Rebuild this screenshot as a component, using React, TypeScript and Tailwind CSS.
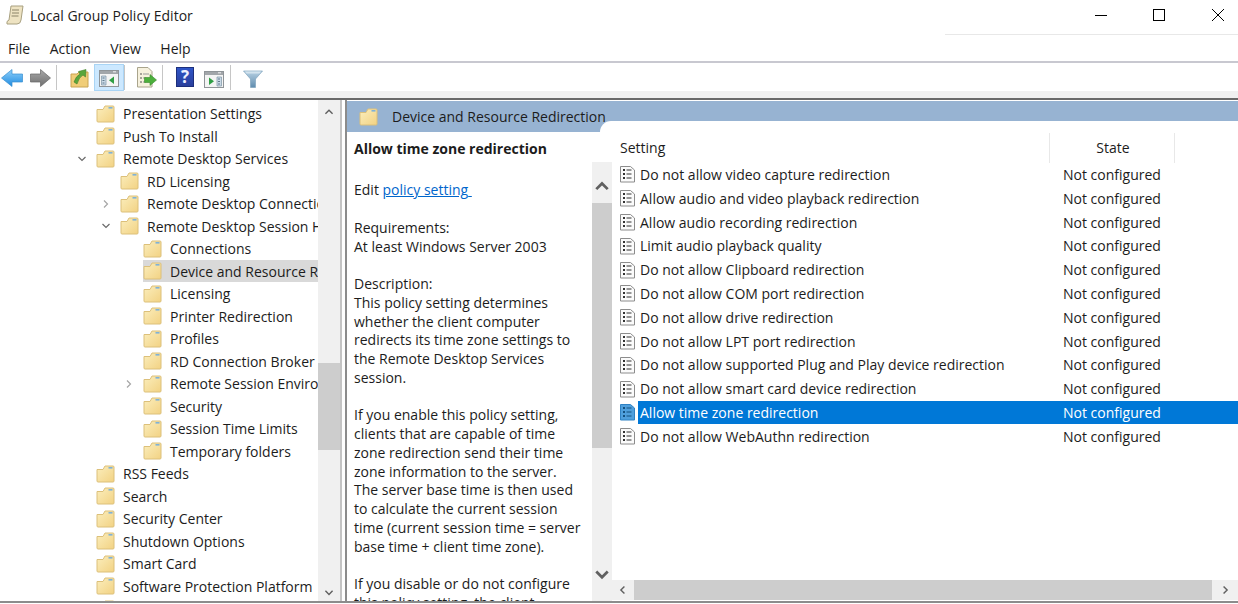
const treeRows = [
  { label: "Presentation Settings", depth: 0 },
  { label: "Push To Install", depth: 0 },
  { label: "Remote Desktop Services", depth: 0, chevron: "down" },
  { label: "RD Licensing", depth: 1 },
  { label: "Remote Desktop Connection Client", depth: 1, chevron: "right" },
  { label: "Remote Desktop Session Host", depth: 1, chevron: "down" },
  { label: "Connections", depth: 2 },
  { label: "Device and Resource Redirection", depth: 2, selected: true },
  { label: "Licensing", depth: 2 },
  { label: "Printer Redirection", depth: 2 },
  { label: "Profiles", depth: 2 },
  { label: "RD Connection Broker", depth: 2 },
  { label: "Remote Session Environment", depth: 2, chevron: "right" },
  { label: "Security", depth: 2 },
  { label: "Session Time Limits", depth: 2 },
  { label: "Temporary folders", depth: 2 },
  { label: "RSS Feeds", depth: 0 },
  { label: "Search", depth: 0 },
  { label: "Security Center", depth: 0 },
  { label: "Shutdown Options", depth: 0 },
  { label: "Smart Card", depth: 0 },
  { label: "Software Protection Platform", depth: 0 },
  { label: "Sound Recording", depth: 0 },
];

const settings = [
  "Do not allow video capture redirection",
  "Allow audio and video playback redirection",
  "Allow audio recording redirection",
  "Limit audio playback quality",
  "Do not allow Clipboard redirection",
  "Do not allow COM port redirection",
  "Do not allow drive redirection",
  "Do not allow LPT port redirection",
  "Do not allow supported Plug and Play device redirection",
  "Do not allow smart card device redirection",
  "Allow time zone redirection",
  "Do not allow WebAuthn redirection",
];

const depthClass = ["pl-[75px]", "pl-[99px]", "pl-[122px]"];

function FolderIcon() {
  return (
    <svg width="19" height="18" viewBox="0 0 19 18" className="shrink-0">
      <defs>
        <linearGradient id="folderFill" x1="0" y1="0" x2="1" y2="1">
          <stop offset="0" stopColor="#fbeebd" />
          <stop offset="1" stopColor="#f2d283" />
        </linearGradient>
      </defs>
      <path d="M1 4.5 L1 16 Q1 17 2 17 L17 17 Q18 17 18 16 L18 2 Q18 1 17 1 L9 1 L7 4.5 Z" fill="url(#folderFill)" stroke="#dcc07a" strokeWidth="1" />
      <rect x="12.5" y="2" width="4" height="1.6" fill="#7fb2d8" />
    </svg>
  );
}

function PolicyIcon({ active }: { active?: boolean }) {
  const line = active ? "#14507f" : "#333333";
  return (
    <svg width="17" height="18" viewBox="0 0 17 18" className="shrink-0">
      <path d="M1.5 1.5 L11.5 1.5 L15.5 5 L15.5 17 L1.5 17 Z" fill={active ? "#4f9fdc" : "#fbfbfb"} stroke={active ? "#2f82c4" : "#8c8c8c"} />
      <path d="M4 5h2M4 9h2M4 13h2" stroke={line} strokeWidth="1.8" />
      <path d="M7.5 5h5M7.5 9h5M7.5 13h5" stroke={line} strokeWidth="1" />
    </svg>
  );
}

function Chevron({ dir }: { dir: string }) {
  return (
    <svg width="10" height="10" viewBox="0 0 10 10">
      {dir === "down" ? (
        <path d="M1.5 3 L5 6.5 L8.5 3" fill="none" stroke="#6a6a6a" strokeWidth="1.2" />
      ) : (
        <path d="M3 1.5 L6.5 5 L3 8.5" fill="none" stroke="#a6a6a6" strokeWidth="1.2" />
      )}
    </svg>
  );
}

function ScrollArrow({ dir, heavy }: { dir: "up" | "down" | "left" | "right"; heavy?: boolean }) {
  const paths = {
    up: "M2 8 L7 3 L12 8",
    down: "M2 4 L7 9 L12 4",
    left: "M9 2 L4 7 L9 12",
    right: "M5 2 L10 7 L5 12",
  };
  return (
    <svg width={heavy ? 16 : 10} height={heavy ? 16 : 10} viewBox="0 0 14 14">
      <path d={paths[dir]} fill="none" stroke="#606060" strokeWidth={heavy ? 2.4 : 2} />
    </svg>
  );
}

function Sep() {
  return <div className="w-px h-[25px] bg-[#c6c6c6] shrink-0" />;
}

function PaneIcon({ arrowLeft }: { arrowLeft?: boolean }) {
  return (
    <svg width="20" height="17" viewBox="0 0 20 17">
      <rect x="0.5" y="0.5" width="19" height="16" fill="#f4f4f4" stroke="#8f9498" />
      <rect x="1" y="1" width="18" height="3" fill="#a2a6aa" />
      <path d="M14 1.8h3" stroke="#f4f4f4" />
      {arrowLeft ? (
        <>
          <path d="M2.5 6h4.5v9h-4.5z" fill="#c9d9e6" stroke="#7d93a3" strokeWidth="0.7" />
          <path d="M3.5 8h2M3.5 10.5h2M3.5 13h2" stroke="#62788a" />
          <path d="M15 6.5 L15 14 L10 10.25 Z" fill="#2f9e44" />
        </>
      ) : (
        <>
          <path d="M13 6h4.5v9h-4.5z" fill="#c9d9e6" stroke="#7d93a3" strokeWidth="0.7" />
          <path d="M14 8h2M14 10.5h2M14 13h2" stroke="#62788a" />
          <path d="M5 6.5 L5 14 L10 10.25 Z" fill="#2f9e44" />
        </>
      )}
    </svg>
  );
}

function Toolbar() {
  return (
    <div className="h-[28px] flex items-center shrink-0 bg-white">
      <svg width="22" height="18" viewBox="0 0 22 18" className="ml-px mt-[2px]">
        <defs>
          <linearGradient id="backFill" x1="0" y1="0" x2="0" y2="1">
            <stop offset="0" stopColor="#8fd0fa" />
            <stop offset="1" stopColor="#1f8be0" />
          </linearGradient>
          <linearGradient id="fwdFill" x1="0" y1="0" x2="0" y2="1">
            <stop offset="0" stopColor="#a8a8a8" />
            <stop offset="1" stopColor="#6f6f6f" />
          </linearGradient>
          <linearGradient id="funnelFill" x1="0" y1="0" x2="0" y2="1">
            <stop offset="0" stopColor="#b9d2e4" />
            <stop offset="1" stopColor="#5f8cae" />
          </linearGradient>
        </defs>
        <path d="M0.5 9 L11 0.5 L11 5 L21.5 5 L21.5 13 L11 13 L11 17.5 Z" fill="url(#backFill)" stroke="#3a8fd0" strokeWidth="0.7" />
      </svg>
      <svg width="21" height="18" viewBox="0 0 21 18" className="ml-[7px] mt-[2px]">
        <path d="M20.5 9 L10.5 0.5 L10.5 5 L0.5 5 L0.5 13 L10.5 13 L10.5 17.5 Z" fill="url(#fwdFill)" stroke="#666666" strokeWidth="0.7" />
      </svg>
      <div className="ml-[5px]"><Sep /></div>
      <svg width="20" height="20" viewBox="0 0 20 20" className="ml-[13px] mt-[2px]">
        <path d="M1 6 L1 19 L18 19 L18 4 L9 4 L7 6 Z" fill="#f0cd78" stroke="#c9a452" />
        <path d="M4 14 Q6 8 10 6 L8.5 3.5 L16 1.5 L15.5 9 L13 7 Q9 9 7 16 Z" fill="#5aa63c" stroke="#3f7f28" strokeWidth="0.6" />
      </svg>
      <div className="ml-[4px] w-[30px] h-[27px] bg-[#cce8ff] border border-[#a9d4f5] flex items-center justify-center">
        <div className="mt-[3px] flex"><PaneIcon arrowLeft /></div>
      </div>
      <Sep />
      <svg width="21" height="21" viewBox="0 0 21 21" className="ml-[11px] mt-[1px]">
        <path d="M1.5 0.5 L12 0.5 L16 4.5 L16 20 L1.5 20 Z" fill="#f6f1de" stroke="#a9a48c" />
        <path d="M4 7h2M4 11h2M4 15h2" stroke="#555555" />
        <path d="M7 7h6M7 11h3M7 15h3" stroke="#999999" />
        <path d="M20.5 13 L14 7.5 L14 10.5 L8.5 10.5 L8.5 15.5 L14 15.5 L14 18.5 Z" fill="#4caf3c" stroke="#37892a" strokeWidth="0.6" />
      </svg>
      <div className="ml-[5px]"><Sep /></div>
      <div className="ml-[13px] w-[18px] h-[20px] bg-linear-to-b from-[#2f55c8] to-[#2a3f9c] border border-[#1d2f7c] text-[#eef0ff] text-[17px] font-bold leading-[18px] text-center">?</div>
      <div className="ml-[10px] mt-[4px] flex"><PaneIcon /></div>
      <div className="ml-[6px]"><Sep /></div>
      <svg width="20" height="18" viewBox="0 0 20 18" className="ml-[12px] mt-[3px]">
        <path d="M0.5 1 L19.5 1 L12.5 9 L12.5 17.5 L7.5 17.5 L7.5 9 Z" fill="url(#funnelFill)" stroke="#7fa3bd" strokeWidth="0.7" />
        <path d="M2 1.5 L18 1.5 L16.5 3.5 L3.5 3.5 Z" fill="#d3e3ee" />
      </svg>
    </div>
  );
}

function Tree() {
  return (
    <div className="w-[318px] overflow-hidden pt-[2.4px] shrink-0">
      {treeRows.map((row) => (
        <div key={row.label} className={`h-[22.5px] flex items-center ${depthClass[row.depth]}`}>
          <div className="w-[21px] pl-[2px] shrink-0 flex items-center">
            {row.chevron && <Chevron dir={row.chevron} />}
          </div>
          <div className={`flex-1 min-w-0 h-full flex items-center ${row.selected ? "bg-[#d9d9d9]" : ""}`}>
            <FolderIcon />
            <span className="ml-[8px] whitespace-nowrap">{row.label}</span>
          </div>
        </div>
      ))}
    </div>
  );
}

function TreeScrollbar() {
  return (
    <div className="w-[24px] bg-[#f0f0f0] flex flex-col items-center shrink-0 border-r-2 border-[#c4c4c4]">
      <div className="h-[26px] flex items-center justify-center"><ScrollArrow dir="up" /></div>
      <div className="mt-[237px] h-[87px] w-full bg-[#cdcdcd]" />
      <div className="flex-1" />
      <div className="h-[16px] flex items-center justify-center"><ScrollArrow dir="down" /></div>
    </div>
  );
}

function Details() {
  return (
    <div className="w-[245px] shrink-0 overflow-hidden pl-[7px] pr-[8px] pt-[7px] leading-[18.75px]">
      <p className="font-bold leading-[20px]">Allow time zone redirection</p>
      <p className="mt-[22px]">Edit <span className="text-[#0066cc] underline">policy setting{"\u00a0"}</span></p>
      <p className="mt-[19px]">Requirements:<br />At least Windows Server 2003</p>
      <p className="mt-[18.75px]">Description:<br />This policy setting determines whether the client computer redirects its time zone settings to the Remote Desktop Services session.</p>
      <p className="mt-[18.75px]">If you enable this policy setting, clients that are capable of time zone redirection send their time zone information to the server. The server base time is then used to calculate the current session time (current session time = server base time + client time zone).</p>
      <p className="mt-[18.75px]">If you disable or do not configure this policy setting, the client computer does not redirect its time zone.</p>
    </div>
  );
}

function DetailsScrollbar() {
  return (
    <div className="w-[20px] shrink-0 mt-[30px] bg-[#f0f0f0] flex flex-col items-center">
      <div className="h-[41px] flex items-center justify-center pt-[11px]"><ScrollArrow dir="up" heavy /></div>
      <div className="h-[245px] w-full bg-[#cdcdcd]" />
      <div className="flex-1" />
      <div className="h-[24px] flex items-center justify-center mb-[14px]"><ScrollArrow dir="down" heavy /></div>
    </div>
  );
}

function SettingsList() {
  return (
    <div className="flex-1 min-w-0 -mt-[11px] bg-white relative flex flex-col">
      <div className="absolute -left-[12px] top-0 w-[24px] h-[11px] rounded-tl-[11px] bg-white" />
      <div className="h-[29.6px] mt-[12px] flex shrink-0">
        <div className="w-[438px] pl-[8px] border-r border-[#e8e8e8] flex items-center">Setting</div>
        <div className="w-[125px] pl-[2px] border-r border-[#e8e8e8] flex items-center justify-center">State</div>
      </div>
      <div className="flex-1 min-h-0">
        {settings.map((name, i) => {
          const active = i === 10;
          return (
            <div key={name} className="h-[23.8px] flex items-center">
              <div className="w-[26px] pl-[7px] shrink-0 flex items-center"><PolicyIcon active={active} /></div>
              <div className={`flex-1 h-full flex items-center pl-[2px] ${active ? "bg-[#0078d7] text-white" : ""}`}>
                <span className="w-[423px] shrink-0 whitespace-nowrap">{name}</span>
                <span>Not configured</span>
              </div>
            </div>
          );
        })}
      </div>
      <div className="h-[20px] bg-[#f0f0f0] flex items-center shrink-0 mb-[1px]">
        <div className="w-[22px] flex items-center justify-center"><ScrollArrow dir="left" /></div>
        <div className="flex-1 h-full bg-[#cdcdcd]" />
        <div className="w-[26px] flex items-center justify-center"><ScrollArrow dir="right" /></div>
      </div>
    </div>
  );
}

export default function App() {
  return (
    <div className="w-[1238px] h-[604px] overflow-hidden flex flex-col bg-white text-[14px] text-[#1c1c1c] font-['Open_Sans','Noto_Sans',sans-serif]">
      <div className="h-[34px] flex items-center shrink-0 pb-[4px]">
        <svg width="20" height="20" viewBox="0 0 20 20" className="ml-[5px]">
          <path d="M6 1 L18 1 L16 15 Q15.5 19 12 19 L2 19 Q1 16 4 15 Z" fill="#eee3c2" stroke="#a8a080" />
          <path d="M7 5h7M7 8h7M6.5 11h7" stroke="#8c8468" />
        </svg>
        <span className="ml-[5px]">Local Group Policy Editor</span>
        <div className="flex-1" />
        <div className="w-[12px] h-px bg-black mr-[46px]" />
        <div className="w-[12px] h-[12px] border border-black mr-[47px]" />
        <svg width="12" height="12" viewBox="0 0 12 12" className="mr-[14px]">
          <path d="M0 0 L12 12 M12 0 L0 12" stroke="#000000" strokeWidth="1" />
        </svg>
      </div>
      <div className="h-px ml-[945px] bg-[#e8e8e8] shrink-0" />
      <div className="h-[28px] flex items-center shrink-0 pl-[8px] gap-[19.5px] border-b-2 border-[#c8c8d0]">
        <span>File</span>
        <span>Action</span>
        <span>View</span>
        <span>Help</span>
      </div>
      <Toolbar />
      <div className="h-[9px] bg-[#f0f0f0] border-b-2 border-[#696969] shrink-0" />
      <div className="flex-1 min-h-0 flex border-b-2 border-[#8c8c8c] mb-px">
        <Tree />
        <TreeScrollbar />
        <div className="w-[3px] shrink-0" />
        <div className="flex-1 min-w-0 flex flex-col border-l-2 border-[#8c8c8c] pt-px">
          <div className="h-[31px] bg-[#97b3d2] flex items-center pl-[12px] shrink-0">
            <FolderIcon />
            <span className="ml-[14px] whitespace-nowrap">Device and Resource Redirection</span>
          </div>
          <div className="flex-1 min-h-0 flex">
            <Details />
            <DetailsScrollbar />
            <SettingsList />
          </div>
        </div>
      </div>
    </div>
  );
}
